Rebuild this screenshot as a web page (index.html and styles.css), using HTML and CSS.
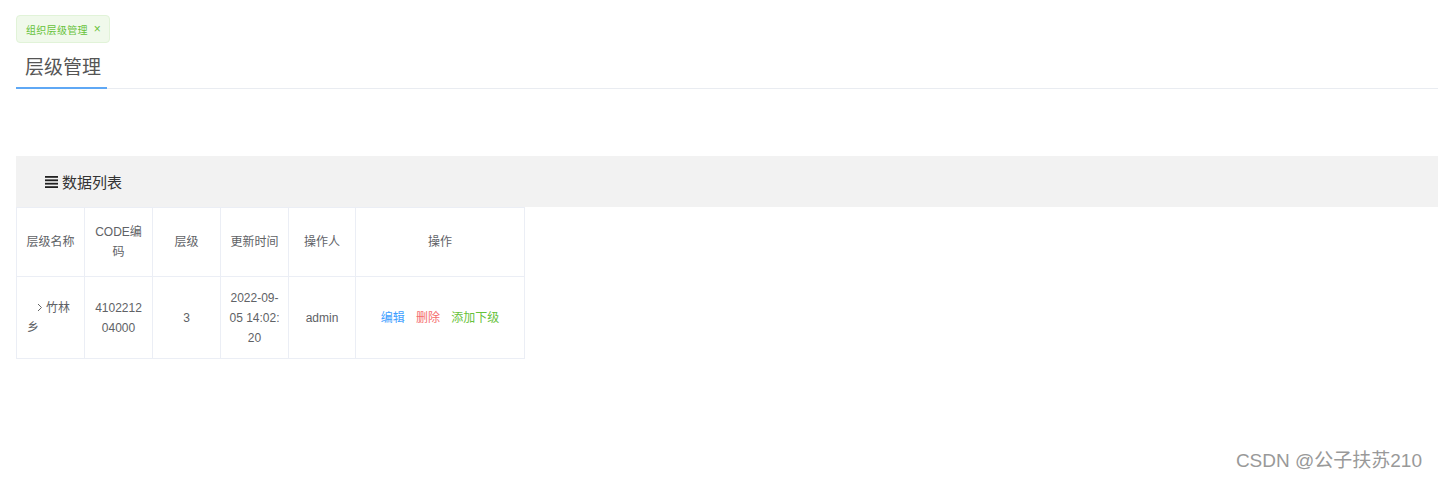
FILE: index.html
```html
<!DOCTYPE html>
<html lang="zh-CN">
  <head>
    <meta charset="UTF-8" />
    <meta name="viewport" content="width=device-width, initial-scale=1.0" />
    <title>层级管理</title>
    <link rel="stylesheet" href="styles.css">
  </head>
  <body>
    <div class="page">
      <div class="tags">
        <span class="tag">组织层级管理 <span class="tag-close">×</span></span>
      </div>

      <div class="tabs">
        <div class="tab active">层级管理</div>
      </div>

      <div class="panel">
        <div class="panel-header">
          <svg class="list-icon" width="13" height="12" viewBox="0 0 13 12">
            <rect x="0" y="0" width="13" height="1.8" />
            <rect x="0" y="3.4" width="13" height="1.8" />
            <rect x="0" y="6.8" width="13" height="1.8" />
            <rect x="0" y="10.2" width="13" height="1.8" />
          </svg>
          <span>数据列表</span>
        </div>

        <table class="data-table">
          <colgroup>
            <col class="col-sm" />
            <col class="col-sm" />
            <col class="col-sm" />
            <col class="col-sm" />
            <col class="col-op" />
            <col class="col-lg" />
          </colgroup>
          <thead>
            <tr>
              <th>层级名称</th>
              <th>CODE编码</th>
              <th>层级</th>
              <th>更新时间</th>
              <th>操作人</th>
              <th>操作</th>
            </tr>
          </thead>
          <tbody>
            <tr>
              <td class="name-cell">
                <span class="expand-icon">
                  <svg width="6" height="9" viewBox="0 0 6 9"><path d="M1 1 L4.5 4.5 L1 8" /></svg>
                </span>竹林乡
              </td>
              <td>410221204000</td>
              <td>3</td>
              <td>2022-09-05 14:02:20</td>
              <td>admin</td>
              <td class="actions">
                <a class="link-edit">编辑</a>
                <a class="link-delete">删除</a>
                <a class="link-add">添加下级</a>
              </td>
            </tr>
          </tbody>
        </table>
      </div>
    </div>

    <div class="watermark">CSDN @公子扶苏210</div>
  </body>
</html>
```

FILE: styles.css
```css
:root {
  --text-color: #606266;
  --border-color: #ebeef5;
  --primary-color: #409eff;
  --danger-color: #f56c6c;
  --success-color: #67c23a;
}

* {
  margin: 0;
  padding: 0;
  box-sizing: border-box;
}

body {
  height: 100vh;
  overflow: hidden;
  position: relative;
  background-color: #fff;
  font-family: 'Liberation Sans', 'Noto Sans CJK SC', sans-serif;
  color: var(--text-color);
}

.page {
  padding: 15px 0 0 16px;
}

.tags {
  display: flex;
}

.tag {
  display: inline-flex;
  align-items: center;
  height: 28px;
  padding: 0 8px 0 9px;
  background-color: #f0f9eb;
  border: 1px solid #e1f3d8;
  border-radius: 4px;
  font-size: 10px;
  letter-spacing: 0.3px;
  color: var(--success-color);
}

.tag-close {
  margin-left: 6px;
  font-size: 12px;
}

.tabs {
  display: flex;
  margin-top: 5px;
  border-bottom: 1px solid #e9ecf1;
}

.tab {
  height: 41px;
  line-height: 40px;
  padding: 0 6px 0 9px;
  font-size: 19px;
  color: #555;
  margin-bottom: -1px;
}

.tab.active {
  border-bottom: 2px solid #5fa8f5;
}

.panel {
  margin-top: 67px;
}

.panel-header {
  display: flex;
  align-items: center;
  gap: 4px;
  height: 51px;
  padding-left: 29px;
  background-color: #f2f2f2;
  font-size: 15px;
  color: #333;
}

.list-icon {
  fill: #222;
}

.data-table {
  table-layout: fixed;
  border-collapse: collapse;
  width: 508px;
  font-size: 12px;
  line-height: 20px;
}

.col-sm {
  width: 68px;
}

.col-op {
  width: 67px;
}

.col-lg {
  width: 169px;
}

.data-table th,
.data-table td {
  border: 1px solid var(--border-color);
  padding: 0 8px;
  text-align: center;
  vertical-align: middle;
  word-break: break-all;
  font-weight: normal;
  color: var(--text-color);
}

.data-table th {
  height: 69px;
}

.data-table td {
  height: 82px;
}

.data-table td.name-cell {
  text-align: left;
  padding-left: 10px;
}

.expand-icon {
  display: inline-block;
  width: 19px;
  padding-left: 10px;
}

.expand-icon svg {
  fill: none;
  stroke: #666;
  stroke-width: 1;
}

.actions a {
  margin: 0 4px;
  cursor: pointer;
}

.link-edit {
  color: var(--primary-color);
}

.link-delete {
  color: var(--danger-color);
}

.link-add {
  color: var(--success-color);
}

.watermark {
  position: absolute;
  right: 16px;
  bottom: 7px;
  font-size: 19px;
  color: #999;
  text-shadow: 0 0 2px #fff;
}
```
